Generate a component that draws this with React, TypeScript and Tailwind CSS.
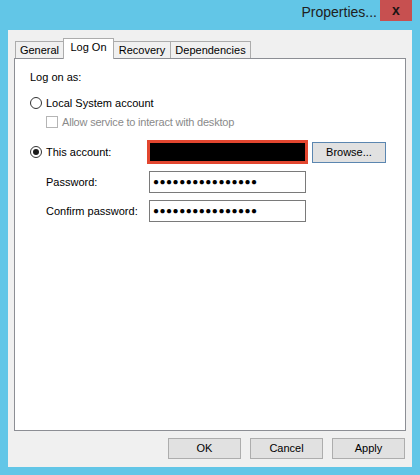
import React from 'react';

const Radio = ({ checked }: { checked?: boolean }) => (
  <span className="w-[12px] h-[12px] rounded-full border border-[#333333] bg-white flex items-center justify-center shrink-0">
    {checked && <span className="w-[6px] h-[6px] rounded-full bg-[#1a1a1a]" />}
  </span>
);

const Dots = () => (
  <span className="text-[10px] tracking-[0.5px] leading-none text-black">●●●●●●●●●●●●●●●●</span>
);

const Tab = ({ label, w, active, first }: { label: string; w: string; active?: boolean; first?: boolean }) => (
  <div
    className={`${w} ${first ? '' : '-ml-px'} flex items-center justify-center border border-[#acacac] ${
      active
        ? 'h-[21px] bg-white border-b-0 relative z-10 -mb-px pb-[3px]'
        : 'h-[17px] bg-[#f0f0f0] border-b-0'
    }`}
  >
    {label}
  </div>
);

export default function App() {
  return (
    <div className="w-[420px] h-[475px] bg-[#62c6e7] flex flex-col font-['Liberation_Sans',Arial,sans-serif] text-[11px] text-black overflow-hidden">
      {/* title bar */}
      <div className="h-[30px] flex justify-end items-start pr-[8px]">
        <span className="mt-[5px] mr-[3px] text-[14px] leading-none text-[#202020]">Properties...</span>
        <div className="w-[32px] h-[21px] bg-[#c75050] flex items-center justify-center pb-[2px]">
          <span className="text-[14px] font-bold leading-none text-[#1c1414]">x</span>
        </div>
      </div>

      {/* dialog */}
      <div className="mx-[8px] h-[437px] bg-[#f0f0f0] flex flex-col px-[6px] pt-[8px]">
        <div className="h-[20px] flex items-end pl-[1px]">
          <Tab label="General" w="w-[49px]" first />
          <Tab label="Log On" w="w-[51px]" active />
          <Tab label="Recovery" w="w-[58px]" />
          <Tab label="Dependencies" w="w-[81px]" />
        </div>

        <div className="h-[373px] bg-white border border-[#8c8e94] flex flex-col pl-[15px]">
          <div className="mt-[10px] h-[16px] flex items-center">Log on as:</div>

          <div className="mt-[10px] h-[16px] flex items-center gap-[4px]">
            <Radio />
            <span>Local System account</span>
          </div>

          <div className="mt-[3px] h-[16px] flex items-center gap-[4px] pl-[16px] text-[#8a8a8a]">
            <span className="w-[12px] h-[12px] border border-[#b5b5b5] bg-white shrink-0" />
            <span className="tracking-[-0.2px]">Allow service to interact with desktop</span>
          </div>

          <div className="mt-[10px] h-[24px] flex items-center">
            <div className="w-[117px] flex items-center gap-[4px]">
              <Radio checked />
              <span>This account:</span>
            </div>
            <div className="w-[161px] h-[24px] border-[3px] border-[#e2462f] bg-black" />
            <button className="ml-[4px] w-[74px] h-[21px] border border-[#5b86b0] bg-[#e1e1e1] text-[11px] leading-none">
              Browse...
            </button>
          </div>

          <div className="mt-[7px] h-[22px] flex items-center">
            <span className="w-[119px] pl-[16px]">Password:</span>
            <div className="w-[157px] h-[22px] border border-[#7a7a7a] bg-white flex items-center pl-[3px]">
              <Dots />
            </div>
          </div>

          <div className="mt-[7px] h-[22px] flex items-center">
            <span className="w-[119px] pl-[16px]">Confirm password:</span>
            <div className="w-[157px] h-[22px] border border-[#7a7a7a] bg-white flex items-center pl-[3px]">
              <Dots />
            </div>
          </div>
        </div>

        <div className="mt-[7px] h-[21px] flex justify-end gap-[9px] pr-[1px]">
          <button className="w-[73px] h-[21px] border border-[#adadad] bg-[#e1e1e1] leading-none">OK</button>
          <button className="w-[73px] h-[21px] border border-[#adadad] bg-[#e1e1e1] leading-none">Cancel</button>
          <button className="w-[73px] h-[21px] border border-[#adadad] bg-[#e1e1e1] leading-none">Apply</button>
        </div>
      </div>
    </div>
  );
}
